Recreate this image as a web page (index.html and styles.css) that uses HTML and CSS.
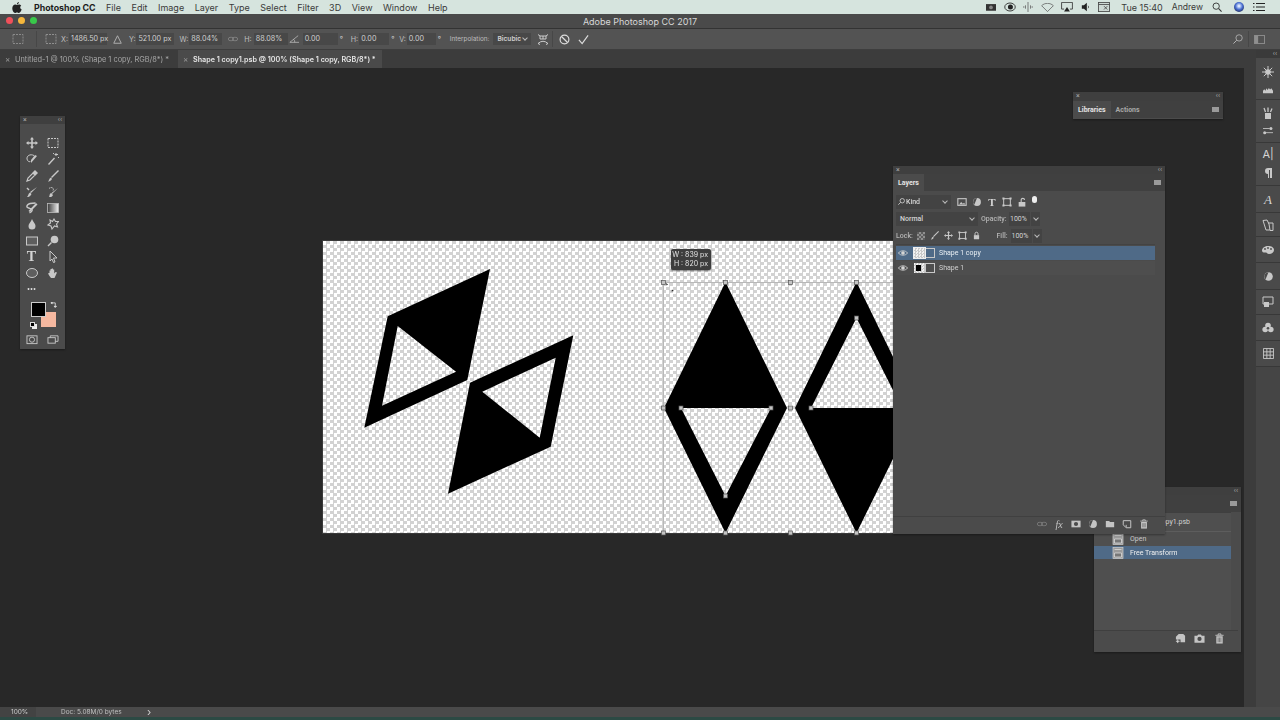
FILE: index.html
```html
<!DOCTYPE html>
<html lang="en">
<head>
  <meta charset="UTF-8">
  <title>Adobe Photoshop CC 2017</title>
  <link rel="stylesheet" href="styles.css">
</head>
<body>
<svg class="sprite" width="0" height="0">
  <defs>
    <symbol id="i-move" viewBox="0 0 12 12"><path d="M6 0 8 2.500H4ZM6 12 4 9.500H8ZM0 6 2.500 4V8ZM12 6 9.500 8V4Z" fill="currentColor"/><path d="M6 2V10M2 6H10" stroke="currentColor" stroke-width="1.600"/></symbol>
    <symbol id="i-marquee" viewBox="0 0 12 12"><rect x="1" y="1.500" width="10" height="9" fill="none" stroke="currentColor" stroke-dasharray="2 1"/></symbol>
    <symbol id="i-lasso" viewBox="0 0 12 12"><path d="M8 2.500C4 .5 .5 3 1 6c.4 2.500 3 3.500 3.500 2" fill="none" stroke="currentColor"/><path d="M5 10 11 3 9 2 5 7Z" fill="currentColor"/></symbol>
    <symbol id="i-wand" viewBox="0 0 12 12"><path d="M1 11 7 4.500 8 5.500 2 12Z" fill="currentColor"/><path d="M9 0V3M7.500 1.500H11M11 4 12 5M6 0 7 1" stroke="currentColor"/></symbol>
    <symbol id="i-dropper" viewBox="0 0 12 12"><path d="M1 11 2 8 7 3 9 5 4 10Z" fill="none" stroke="currentColor" stroke-width="1.200"/><path d="M6.500 2.500 9 0l3 3-2.500 2.500Z" fill="currentColor"/></symbol>
    <symbol id="i-brush" viewBox="0 0 12 12"><path d="M11 0 12 1 5 8 4 7Z" fill="currentColor"/><path d="M4 7.500 5 9C4 11 2 11.500 1 11.500 2.500 10.500 2 8 4 7.500Z" fill="currentColor"/></symbol>
    <symbol id="i-stamp" viewBox="0 0 12 12"><path d="M11 1 5 7 4 6ZM4 6.500 5.500 8C4.500 10.500 2.500 11 1 11 2.500 10 2 7.500 4 6.500Z" fill="currentColor"/><path d="M1 2 3 4" stroke="currentColor" stroke-width="1.500"/></symbol>
    <symbol id="i-history" viewBox="0 0 12 12"><path d="M11 2 5 8 4.500 7ZM4 7 6 9C5 11.500 3 11 2 11 3 10 2 8 4 7Z" fill="currentColor"/><path d="M2 2.500C5 0 8 3 5.500 5" fill="none" stroke="currentColor" stroke-dasharray="1.500 .8"/></symbol>
    <symbol id="i-eraser" viewBox="0 0 12 12"><path d="M9.500 1C7 1 3 1 1.500 3 0 5 1.500 6 4 6.500 7 7 7 9 3.500 11" fill="none" stroke="currentColor" stroke-width="1.400"/><path d="M10 1 11.500 2.500 4 10 2.500 9Z" fill="currentColor"/></symbol>
    <symbol id="i-gradient" viewBox="0 0 12 12"><defs><linearGradient id="grad"><stop offset="0" stop-color="#3a3a3a"/><stop offset="1" stop-color="#efefef"/></linearGradient></defs><rect x=".5" y="1.500" width="11" height="9" fill="url(#grad)" stroke="#bbb" stroke-width=".8"/></symbol>
    <symbol id="i-drop" viewBox="0 0 12 12"><path d="M6 1C7 4 9.500 5.500 9.500 8A3.500 3.500 0 0 1 2.500 8C2.500 5.500 5 4 6 1Z" fill="currentColor"/></symbol>
    <symbol id="i-smudge" viewBox="0 0 12 12"><path d="M7 1 8.500 3.500 11.500 3.500 9.500 6 10.500 9 7.500 8 5 11 4 8 1 7 3.500 5 3 2 5.500 3.500Z" fill="none" stroke="currentColor" stroke-width="1.100"/></symbol>
    <symbol id="i-rect" viewBox="0 0 12 12"><rect x=".5" y="2" width="11" height="8" fill="#5e5e5e" stroke="currentColor"/></symbol>
    <symbol id="i-dodge" viewBox="0 0 12 12"><circle cx="7.500" cy="4.500" r="3.800" fill="currentColor"/><path d="M4.500 7.500 1 11" stroke="currentColor" stroke-width="1.500"/></symbol>
    <symbol id="i-select" viewBox="0 0 12 12"><path d="M3 0 10 7 6.500 7 8 11 6.500 11.500 5 8 3 10Z" fill="none" stroke="currentColor"/></symbol>
    <symbol id="i-ellipse" viewBox="0 0 12 12"><ellipse cx="6" cy="6" rx="5.500" ry="4.500" fill="#5e5e5e" stroke="currentColor"/></symbol>
    <symbol id="i-hand" viewBox="0 0 12 12"><path d="M2.500 6V3.500h1V6 2h1.200v4V1.500H6V6V2.500h1.200V6.500L8.500 5 10 5.500 7.500 11H4C3 10 2 8 1 6.500L2 6Z" fill="currentColor"/></symbol>
    <symbol id="i-quick" viewBox="0 0 12 12"><rect x=".5" y="2" width="11" height="8.500" fill="none" stroke="currentColor"/><circle cx="6" cy="6.200" r="2.800" fill="none" stroke="currentColor"/></symbol>
    <symbol id="i-screen" viewBox="0 0 12 12"><rect x=".5" y="4" width="8" height="6" fill="none" stroke="currentColor"/><path d="M3 4V2H11.500V8H8.500" fill="none" stroke="currentColor"/></symbol>
    <symbol id="i-image" viewBox="0 0 12 12"><rect x="1" y="2" width="10" height="8" fill="none" stroke="currentColor" stroke-width="1.300"/><path d="M2.500 9 5 6 7 8 8.500 7 10 9Z" fill="currentColor"/></symbol>
    <symbol id="i-adjust" viewBox="0 0 12 12"><circle cx="6" cy="6" r="4.700" fill="currentColor"/><path d="M6 1.300A4.700 4.700 0 0 0 2.700 9.300Z" fill="#4b4b4b"/></symbol>
    <symbol id="i-shape" viewBox="0 0 12 12"><rect x="2" y="2" width="8" height="8" fill="none" stroke="currentColor" stroke-width="1.200"/><path d="M.5.500H3V3H.5ZM9 .5h2.500V3H9ZM.5 9H3v2.500H.5ZM9 9h2.500v2.500H9Z" fill="currentColor"/></symbol>
    <symbol id="i-smart" viewBox="0 0 12 12"><path d="M2 6H10V11.500H2Z" fill="currentColor"/><path d="M5 6V3.500C5 1 9 1 9 3.500" fill="none" stroke="currentColor" stroke-width="1.300"/></symbol>
    <symbol id="i-lock" viewBox="0 0 12 12"><path d="M2.500 5.500H9.500V11H2.500Z" fill="currentColor"/><path d="M4 5.500V3.500C4 1 8 1 8 3.500V5.500" fill="none" stroke="currentColor" stroke-width="1.300"/></symbol>
    <symbol id="i-eye" viewBox="0 0 12 12"><path d="M.5 6C3 2.500 9 2.500 11.500 6 9 9.500 3 9.500 .5 6Z" fill="none" stroke="currentColor"/><circle cx="6" cy="6" r="2.200" fill="currentColor"/></symbol>
    <symbol id="i-link" viewBox="0 0 12 12"><rect x=".5" y="4" width="6" height="4" rx="2" fill="none" stroke="currentColor"/><rect x="5.500" y="4" width="6" height="4" rx="2" fill="none" stroke="currentColor"/></symbol>
    <symbol id="i-mask" viewBox="0 0 12 12"><path d="M.5 2H11.500V10H.5Z" fill="currentColor"/><circle cx="6" cy="6" r="2.500" fill="#4b4b4b"/></symbol>
    <symbol id="i-folder" viewBox="0 0 12 12"><path d="M1 2.500H5L6 3.500H11V10H1Z" fill="currentColor"/></symbol>
    <symbol id="i-new" viewBox="0 0 12 12"><path d="M1.500 2H10.500V10.500H5L1.500 7Z M5 7V10" fill="none" stroke="currentColor" stroke-width="1.200"/></symbol>
    <symbol id="i-trash" viewBox="0 0 12 12"><path d="M1.500 2.500H10.500M4.500 2.500V1H7.500V2.500" fill="none" stroke="currentColor"/><path d="M2.500 3.500H9.500V11.500H2.500Z" fill="currentColor"/><path d="M4.500 5V10M6 5V10M7.500 5V10" stroke="#4b4b4b" stroke-width=".6"/></symbol>
    <symbol id="i-doc" viewBox="0 0 12 12"><rect x="1" y="0.500" width="10" height="11" fill="#9a9a9a" stroke="#cfcfcf" stroke-width=".7"/><path d="M2.500 2.500H9.500M2.500 6H9.500V10H2.500Z" fill="#777" stroke="#e4e4e4" stroke-width=".7"/></symbol>
    <symbol id="i-camera" viewBox="0 0 12 12"><path d="M.5 3H3.500L4.500 1.500H7.500L8.500 3H11.500V10.500H.5Z" fill="currentColor"/><circle cx="6" cy="6.500" r="2.300" fill="#4b4b4b"/></symbol>
    <symbol id="i-snap" viewBox="0 0 12 12"><path d="M4 1H9L11 3V10H6V7H1V4Z" fill="currentColor"/><path d="M1 9H5M3 7V11" stroke="#ddd"/></symbol>
    <symbol id="i-gear" viewBox="0 0 12 12"><circle cx="6" cy="6" r="2.800" fill="currentColor"/><path d="M6 0V12M0 6H12M1.800 1.800 10.200 10.200M10.200 1.800 1.800 10.200" stroke="currentColor"/></symbol>
    <symbol id="i-hist" viewBox="0 0 12 12"><path d="M0 10V7L1.500 5 3 7 4 4 5.500 6 7 3.500 8.500 5.500 10 4 12 7V10Z" fill="currentColor"/></symbol>
    <symbol id="i-brushes" viewBox="0 0 12 12"><path d="M3 6H9V12H3Z" fill="currentColor"/><path d="M3.500 5 2 1M6 5V.5M8.500 5 10 1.500" stroke="currentColor" stroke-width="1.300"/></symbol>
    <symbol id="i-sliders" viewBox="0 0 12 12"><path d="M0 3H8M3 8H12" stroke="currentColor"/><circle cx="9.500" cy="3" r="1.800" fill="currentColor"/><circle cx="2" cy="8" r="1.800" fill="currentColor"/></symbol>
    <symbol id="i-para" viewBox="0 0 12 12"><path d="M6 1H10V11H8V3H7V11H6V7A3 3 0 0 1 6 1Z" fill="currentColor"/></symbol>
    <symbol id="i-swatch" viewBox="0 0 12 12"><path d="M1 1.500 5 1 7 5 8 11 4 11Z" fill="none" stroke="currentColor"/><path d="M6 4H11V11.500H8" fill="none" stroke="currentColor"/></symbol>
    <symbol id="i-palette" viewBox="0 0 12 12"><path d="M6 2C2 2 0 4.500 0 6.500 0 9 3 8.500 4 8.500 5 8.500 5 10 7 10 10 10 12 8 12 6 12 3.500 9.500 2 6 2Z" fill="currentColor"/><circle cx="3" cy="5" r=".9" fill="#4b4b4b"/><circle cx="6" cy="4" r=".9" fill="#4b4b4b"/><circle cx="9" cy="5" r=".9" fill="#4b4b4b"/></symbol>
    <symbol id="i-grid" viewBox="0 0 12 12"><path d="M.5.500H11.500V11.500H.5ZM4.200.5V11.500M7.800.5V11.500M.5 4.200H11.500M.5 7.800H11.500" fill="none" stroke="currentColor"/></symbol>
    <symbol id="i-style" viewBox="0 0 12 12"><path d="M1 1H11V8H1Z" fill="none" stroke="currentColor"/><path d="M2 6H7V11H2Z" fill="currentColor"/></symbol>
    <symbol id="i-flower" viewBox="0 0 12 12"><circle cx="6" cy="3.500" r="2.800" fill="currentColor"/><circle cx="3.200" cy="7.500" r="2.800" fill="currentColor"/><circle cx="8.800" cy="7.500" r="2.800" fill="currentColor"/><circle cx="6" cy="6.300" r="1.300" fill="#4b4b4b"/></symbol>
  </defs>
</svg>

<div class="screen">
  <div class="menubar">
    <svg class="apple" viewBox="0 0 12 14" width="10" height="11"><path d="M8.500 0C8.600 1.500 7.300 3 5.900 3 5.800 1.500 7.200.2 8.500 0ZM6 3.700C6.800 3.700 7.500 3.100 8.700 3.100 9.500 3.100 10.700 3.500 11.400 4.600 9.400 5.800 9.700 8.700 12 9.600 11.300 11.300 10 14 8.500 14 7.500 14 7.200 13.400 6 13.400 4.800 13.400 4.400 14 3.500 14 1.800 14 0 10.800 0 8 0 5 2 3.200 3.800 3.200 4.800 3.200 5.400 3.700 6 3.700Z" fill="#222"/></svg>
    <span class="menu-app">Photoshop CC</span>
    <span>File</span><span>Edit</span><span>Image</span><span>Layer</span><span>Type</span><span>Select</span><span>Filter</span><span>3D</span><span>View</span><span>Window</span><span>Help</span>
    <div class="status-icons">
      <svg viewBox="0 0 12 12" width="10" height="10"><path d="M0 2.500H12V10.500H0Z" fill="#333"/><circle cx="6" cy="6.500" r="2.200" fill="#888"/></svg>
      <svg viewBox="0 0 14 12" width="12" height="10"><ellipse cx="7" cy="6" rx="6.300" ry="4.800" fill="none" stroke="#222"/><circle cx="7.500" cy="6" r="3" fill="#222"/></svg>
      <svg viewBox="0 0 12 12" width="10" height="10"><path d="M6 0V12M3 4V8M1 5V7M9 4V8M11 5V7" stroke="#666"/></svg>
      <svg viewBox="0 0 14 10" width="13" height="9"><path d="M.5 3C4 -.5 10 -.5 13.500 3L7 9.500Z" fill="none" stroke="#555" stroke-width=".8"/></svg>
      <svg viewBox="0 0 14 12" width="12" height="10"><path d="M3.500 8.500H.5V.5H13.500V8.500H10.500" fill="none" stroke="#333"/><path d="M7 6 10.500 11.500H3.500Z" fill="#222"/></svg>
      <svg viewBox="0 0 12 12" width="10" height="10"><path d="M1 4H3.500L7 1V11L3.500 8H1Z" fill="#222"/><path d="M8.500 4.500Q10 6 8.500 7.500" fill="none" stroke="#555"/></svg>
      <svg viewBox="0 0 14 12" width="12" height="10"><rect x=".5" y=".5" width="13" height="11" fill="#cdd8d3" stroke="#444"/><path d="M.5 3H13.500" stroke="#444"/><path d="M7 5 11 9M11 5 7 9" stroke="#444"/></svg>
    </div>
    <span class="clock">Tue 15:40</span>
    <span class="user">Andrew</span>
    <svg class="menu-search" viewBox="0 0 12 12" width="10" height="10"><circle cx="5" cy="5" r="3.800" fill="none" stroke="#333" stroke-width="1.100"/><path d="M8 8 11.500 11.500" stroke="#333" stroke-width="1.300"/></svg>
    <span class="siri"></span>
    <svg class="menu-list" viewBox="0 0 12 10" width="12" height="10"><path d="M3 1.500H12M3 5H12M3 8.500H12M0 1.500H1.500M0 5H1.500M0 8.500H1.500" stroke="#222" stroke-width="1.100"/></svg>
  </div>

  <div class="titlebar">
    <div class="lights"><i class="red"></i><i class="yellow"></i><i class="green"></i></div>
    <span class="title-text">Adobe Photoshop CC 2017</span>
  </div>

  <div class="options">
    <svg class="ico tool-ico" width="12" height="12"><use href="#i-marquee"/></svg>
    <span class="opt-sep sep-a"></span>
    <svg class="ico ref-ico" width="12" height="12"><use href="#i-marquee"/></svg>
    <label class="lbl lbl-x">X:</label><span class="field w38">1486.50 px</span>
    <svg class="ico delta" viewBox="0 0 12 12" width="9" height="9"><path d="M6 1 11 11H1Z" fill="none" stroke="currentColor" stroke-width="1.200"/></svg>
    <label class="lbl lbl-y">Y:</label><span class="field w38">521.00 px</span>
    <label class="lbl lbl-w">W:</label><span class="field w33">88.04%</span>
    <svg class="ico link" width="10" height="10"><use href="#i-link"/></svg>
    <label class="lbl lbl-h">H:</label><span class="field w34">88.08%</span>
    <svg class="ico angle" viewBox="0 0 12 12" width="10" height="10"><path d="M11 2 1 10H12M7 10Q7 7 5 6" fill="none" stroke="currentColor"/></svg>
    <span class="field w35">0.00</span><span class="deg">°</span>
    <label class="lbl lbl-hs">H:</label><span class="field w30">0.00</span><span class="deg">°</span>
    <label class="lbl lbl-v">V:</label><span class="field w29">0.00</span><span class="deg">°</span>
    <label class="lbl lbl-int">Interpolation:</label>
    <span class="field select-b">Bicubic<b class="chev"></b></span>
    <svg class="ico warp" viewBox="0 0 12 12" width="12" height="12"><path d="M1 1.500 3 3H9L11 1.500M3 3V6H9V3M6 3V6M1 10.500Q6 6 11 10.500M1 10.500 3 11.500M11 10.500 9 11.500" fill="none" stroke="currentColor"/></svg>
    <span class="opt-sep sep-b"></span>
    <svg class="ico cancel" viewBox="0 0 12 12" width="11" height="11"><circle cx="6" cy="6" r="4.800" fill="none" stroke="#ddd" stroke-width="1.300"/><path d="M2.700 2.700 9.300 9.300" stroke="#ddd" stroke-width="1.300"/></svg>
    <svg class="ico commit" viewBox="0 0 12 12" width="11" height="11"><path d="M1 6.500 4.500 10.500 11 1.500" fill="none" stroke="#ddd" stroke-width="1.300"/></svg>
    <div class="opt-right">
      <svg class="ico" viewBox="0 0 12 12" width="10" height="10"><circle cx="7.300" cy="4.700" r="3.800" fill="none" stroke="currentColor"/><path d="M4.500 7.500 .5 11.500" stroke="currentColor" stroke-width="1.200"/></svg>
      <span class="opt-sep"></span>
      <svg class="ico ws-ico" viewBox="0 0 12 10" width="11" height="9"><rect x=".5" y=".5" width="11" height="9" fill="none" stroke="currentColor"/><rect x=".5" y=".5" width="4" height="9" fill="currentColor"/></svg>
    </div>
  </div>

  <div class="tabs">
    <div class="tab"><span class="tab-x">×</span>Untitled-1 @ 100% (Shape 1 copy, RGB/8*) *</div>
    <div class="tab active"><span class="tab-x">×</span>Shape 1 copy1.psb @ 100% (Shape 1 copy, RGB/8*) *</div>
  </div>

  <div class="work">
    <div class="stage">
      <div class="artboard">
        <svg class="shapes" viewBox="323 241 600 292" width="600" height="292">
          <path fill-rule="evenodd" d="M490 269 387.700 316.300 364.300 427.700 467.300 380ZM397.700 326 456 371.700 382 405.700Z"/>
          <path fill-rule="evenodd" d="M573.300 335.300 470 382.700 448 493.700 550.700 446.700ZM555.700 357.700 482.300 391.700 539.700 437.700Z"/>
          <path fill-rule="evenodd" d="M725.500 282 664 408 725.500 533 787 408ZM681 408H771L725.500 496Z"/>
          <path fill-rule="evenodd" d="M856.500 282 795 408 856.500 533 918 408ZM856.500 318 811 408H902Z"/>
          <path class="bbox" d="M663.500 282.500H892M663.500 282.500V533"/>
          <g class="handles">
            <rect x="661.500" y="280.500" width="4" height="4"/><rect x="723.500" y="280.500" width="4" height="4"/><rect x="788.500" y="280.500" width="4" height="4"/><rect x="854.500" y="280.500" width="4" height="4"/>
            <rect x="661.500" y="406" width="4" height="4"/><rect x="679" y="406" width="4" height="4"/><rect x="769" y="406" width="4" height="4"/><rect x="788.500" y="406" width="4" height="4"/><rect x="809" y="406" width="4" height="4"/>
            <rect x="854.500" y="316" width="4" height="4"/><rect x="723.500" y="494" width="4" height="4"/>
            <rect x="661.500" y="531" width="4" height="4"/><rect x="723.500" y="531" width="4" height="4"/><rect x="788.500" y="531" width="4" height="4"/><rect x="854.500" y="531" width="4" height="4"/>
          </g>
          <path d="M666 283 668 284.500 666.500 285.500ZM672 289.500 674 291 671.500 291.500Z" fill="#222"/>
        </svg>
        <div class="size-tip">W : 839 px<br>H : 820 px</div>
      </div>

      <div class="panel toolbox">
        <div class="panel-head"><span class="close">×</span><span class="collapse">‹‹</span></div>
        <div class="tool-grid">
          <svg width="12" height="12"><use href="#i-move"/></svg><svg width="12" height="12"><use href="#i-marquee"/></svg>
          <svg width="12" height="12"><use href="#i-lasso"/></svg><svg width="12" height="12"><use href="#i-wand"/></svg>
          <svg width="12" height="12"><use href="#i-dropper"/></svg><svg width="12" height="12"><use href="#i-brush"/></svg>
          <svg width="12" height="12"><use href="#i-stamp"/></svg><svg width="12" height="12"><use href="#i-history"/></svg>
          <svg width="12" height="12"><use href="#i-eraser"/></svg><svg width="12" height="12"><use href="#i-gradient"/></svg>
          <svg width="12" height="12"><use href="#i-drop"/></svg><svg width="12" height="12"><use href="#i-smudge"/></svg>
          <svg width="12" height="12"><use href="#i-rect"/></svg><svg width="12" height="12"><use href="#i-dodge"/></svg>
          <span class="type-t">T</span><svg width="12" height="12"><use href="#i-select"/></svg>
          <svg width="12" height="12"><use href="#i-ellipse"/></svg><svg width="12" height="12"><use href="#i-hand"/></svg>
          <span class="dots">•••</span><span></span>
        </div>
        <div class="swatches">
          <span class="bg-color"></span>
          <span class="fg-color"></span>
          <span class="default-colors"></span>
          <svg class="swap" viewBox="0 0 8 8" width="7" height="7"><path d="M1 1H6V6M1 1 2.500 0V2ZM6 6 4.500 5H7.500Z" fill="none" stroke="#ddd"/></svg>
        </div>
        <div class="tool-bottom">
          <svg width="12" height="11"><use href="#i-quick"/></svg><svg width="12" height="11"><use href="#i-screen"/></svg>
        </div>
      </div>

      <div class="panel libraries">
        <div class="panel-head"><span class="close">×</span><span class="collapse">‹‹</span></div>
        <div class="panel-tabs">
          <span class="ptab on">Libraries</span><span class="ptab">Actions</span>
          <span class="panel-menu"></span>
        </div>
      </div>

      <div class="panel history">
        <div class="panel-head"><span class="collapse">‹‹</span></div>
        <div class="panel-tabs"><span class="panel-menu"></span></div>
        <div class="hist-body">
          <div class="hist-file">Shape 1 copy1.psb</div>
          <div class="hist-row"><svg width="12" height="12"><use href="#i-doc"/></svg>Open</div>
          <div class="hist-row on"><svg width="12" height="12"><use href="#i-doc"/></svg>Free Transform</div>
        </div>
        <div class="panel-foot">
          <svg width="11" height="11"><use href="#i-snap"/></svg><svg width="11" height="11"><use href="#i-camera"/></svg><svg width="11" height="11"><use href="#i-trash"/></svg>
        </div>
      </div>

      <div class="panel layers">
        <div class="panel-head"><span class="close">×</span><span class="collapse">‹‹</span></div>
        <div class="panel-tabs">
          <span class="ptab on">Layers</span>
          <span class="panel-menu"></span>
        </div>
        <div class="layer-row-ctl filter-row">
          <span class="ctl kind"><svg class="kind-mag" viewBox="0 0 12 12" width="7" height="7"><circle cx="7.300" cy="4.700" r="3.800" fill="none" stroke="currentColor" stroke-width="1.400"/><path d="M4.500 7.500 .5 11.500" stroke="currentColor" stroke-width="1.400"/></svg>Kind<b class="chev"></b></span>
          <svg width="10" height="10"><use href="#i-image"/></svg>
          <svg width="10" height="10"><use href="#i-adjust"/></svg>
          <span class="type-t small">T</span>
          <svg width="10" height="10"><use href="#i-shape"/></svg>
          <svg width="10" height="10"><use href="#i-smart"/></svg>
          <span class="toggle"></span>
        </div>
        <div class="layer-row-ctl blend-row">
          <span class="ctl normal">Normal<b class="chev"></b></span>
          <span class="ctl-lbl">Opacity:</span>
          <span class="ctl pct">100%</span><span class="ctl pct-arrow"><b class="chev"></b></span>
        </div>
        <div class="layer-row-ctl lock-row">
          <span class="ctl-lbl lock-lbl">Lock:</span>
          <span class="lock-check"></span>
          <svg width="9" height="9"><use href="#i-brush"/></svg>
          <svg width="9" height="9"><use href="#i-move"/></svg>
          <svg width="9" height="9"><use href="#i-shape"/></svg>
          <svg width="9" height="9"><use href="#i-lock"/></svg>
          <span class="ctl-lbl fill-lbl">Fill:</span>
          <span class="ctl pct">100%</span><span class="ctl pct-arrow"><b class="chev"></b></span>
        </div>
        <div class="layer-list">
          <div class="layer on">
            <svg class="eye" width="10" height="10"><use href="#i-eye"/></svg>
            <span class="thumb selected"></span><span class="vmask"></span>
            <span class="layer-name">Shape 1 copy</span>
          </div>
          <div class="layer">
            <svg class="eye" width="10" height="10"><use href="#i-eye"/></svg>
            <span class="thumb"><i></i></span><span class="vmask"></span>
            <span class="layer-name">Shape 1</span>
          </div>
        </div>
        <div class="panel-foot">
          <svg class="dim" width="10" height="10"><use href="#i-link"/></svg>
          <span class="fx">fx</span>
          <svg width="10" height="10"><use href="#i-mask"/></svg>
          <svg width="10" height="10"><use href="#i-adjust"/></svg>
          <svg width="10" height="10"><use href="#i-folder"/></svg>
          <svg width="10" height="10"><use href="#i-new"/></svg>
          <svg width="10" height="10"><use href="#i-trash"/></svg>
        </div>
      </div>
    </div>

    <div class="dock">
      <div class="dock-head">‹‹</div>
      <div class="dock-group h42"><svg width="12" height="12"><use href="#i-gear"/></svg><svg width="14" height="10"><use href="#i-hist"/></svg></div>
      <div class="dock-group h43"><svg width="12" height="12"><use href="#i-brushes"/></svg><svg width="12" height="10"><use href="#i-sliders"/></svg></div>
      <div class="dock-group h43"><span class="char-a">A|</span><svg width="12" height="12"><use href="#i-para"/></svg></div>
      <div class="dock-group h27"><span class="char-a italic">A</span></div>
      <div class="dock-group h24"><svg width="12" height="12"><use href="#i-swatch"/></svg></div>
      <div class="dock-group h26"><svg width="12" height="12"><use href="#i-palette"/></svg></div>
      <div class="dock-group h27"><svg width="11" height="11"><use href="#i-adjust"/></svg></div>
      <div class="dock-group h25"><svg width="12" height="12"><use href="#i-style"/></svg></div>
      <div class="dock-group h26"><svg width="12" height="12"><use href="#i-flower"/></svg></div>
      <div class="dock-group h26"><svg width="11" height="11"><use href="#i-grid"/></svg></div>
    </div>
  </div>

  <div class="statusbar">
    <span class="zoom-box">100%</span>
    <span class="doc-info">Doc: 5.08M/0 bytes</span>
    <span class="status-arrow">›</span>
  </div>
  <div class="desktop-strip"></div>
</div>
</body>
</html>
```

FILE: styles.css
```css
* {
  box-sizing: border-box;
}

html, body {
  margin: 0;
  padding: 0;
  background: #282828;
}

.sprite {
  position: absolute;
}

.screen {
  width: 1280px;
  height: 720px;
  overflow: hidden;
  display: flex;
  flex-direction: column;
  font-family: Inter, "Liberation Sans", sans-serif;
  color: #cfcfcf;
  font-size: 7.5px;
  filter: blur(0.45px);
}

/* mac menu bar */
.menubar {
  height: 14px;
  background: #d6e4de;
  color: #3a3a3a;
  display: flex;
  align-items: center;
  font-size: 9px;
  gap: 10.5px;
  padding-left: 12px;
  flex: none;
}

.apple {
  margin-right: 1.5px;
}

.menu-app {
  font-weight: 700;
  font-size: 8.8px;
  color: #1c1c1c;
}

.status-icons {
  margin-left: auto;
  display: flex;
  align-items: center;
  gap: 7.5px;
}

.clock {
  margin-left: 0.5px;
}

.user {
  margin-left: -1.5px;
  font-size: 8.6px;
}

.menu-search {
  margin-left: -1.5px;
}

.siri {
  width: 10px;
  height: 10px;
  border-radius: 50%;
  background: radial-gradient(circle at 50% 40%, #d9e6ff 10%, #4a6fd0 45%, #1c2350 85%);
  margin-left: 1.5px;
}

.menu-list {
  margin-left: -1.5px;
  margin-right: 15px;
}

/* window title */
.titlebar {
  height: 15px;
  background: #4a4a4a;
  border-bottom: 1px solid #333;
  display: flex;
  align-items: center;
  justify-content: center;
  position: relative;
  flex: none;
}

.title-text {
  font-size: 9px;
  color: #d8d8d8;
}

.lights {
  position: absolute;
  left: 6px;
  top: 3px;
  display: flex;
  gap: 5px;
}

.lights i {
  width: 7px;
  height: 7px;
  border-radius: 50%;
}

.red { background: #f0505a; }
.yellow { background: #f5b73c; }
.green { background: #38c84a; }

/* options bar */
.options {
  height: 21px;
  background: #535353;
  border-bottom: 1px solid #3e3e3e;
  display: flex;
  align-items: center;
  flex: none;
  padding-left: 12px;
  font-size: 7.2px;
}

.ico {
  color: #b5b5b5;
  flex: none;
}

.tool-ico {
  color: #8a8a8a;
}

.opt-sep {
  width: 1px;
  height: 16px;
  background: #474747;
  flex: none;
}

.sep-a { margin-left: 12px; }
.ref-ico { margin-left: 8px; color: #8f8f8f; }
.lbl { color: #bdbdbd; flex: none; }
.lbl-x { margin-left: 4px; margin-right: 1px; }
.delta { margin-left: 6px; }
.lbl-y { margin-left: 7px; margin-right: 1px; }
.lbl-w { margin-left: 5px; margin-right: 1px; }
.link { margin-left: 6px; color: #888; }
.lbl-h { margin-left: 6px; margin-right: 2px; }
.angle { margin-left: 1px; }
.angle + .field { margin-left: 4px; }
.lbl-hs { margin-left: 7px; margin-right: 1px; }
.lbl-v { margin-left: 4px; margin-right: 1px; }
.lbl-int { margin-left: 8px; font-size: 6.4px; }

.field {
  height: 12px;
  line-height: 12px;
  background: #484848;
  color: #d0d0d0;
  padding-left: 2px;
  flex: none;
  white-space: nowrap;
}

.w38 { width: 38px; }
.w33 { width: 33px; }
.w34 { width: 34px; }
.w35 { width: 35px; }
.w30 { width: 30px; }
.w29 { width: 29px; }

.deg {
  margin-left: 2px;
  width: 4px;
  flex: none;
}

.select-b {
  width: 38px;
  margin-left: 4px;
  padding-left: 4px;
  font-weight: 600;
  font-size: 6.6px;
  position: relative;
}

.chev {
  position: absolute;
  right: 4px;
  top: 50%;
  width: 4px;
  height: 4px;
  margin-top: -3px;
  border-right: 1px solid #bbb;
  border-bottom: 1px solid #bbb;
  transform: rotate(45deg);
}

.warp { margin-left: 6px; color: #ccc; }
.sep-b { margin-left: 3px; }
.cancel { margin-left: 5.5px; }
.commit { margin-left: 8px; }

.opt-right {
  margin-left: auto;
  margin-right: 15px;
  display: flex;
  align-items: center;
  gap: 5px;
}

.ws-ico {
  color: #8f8f8f;
}

/* document tabs */
.tabs {
  height: 18px;
  background: #3c3c3c;
  display: flex;
  flex: none;
}

.tab {
  width: 178px;
  display: flex;
  align-items: center;
  padding-left: 5px;
  color: #a6a6a6;
  white-space: nowrap;
  font-size: 7.4px;
}

.tab.active {
  width: 204px;
  background: #4a4a4a;
  color: #e6e6e6;
  font-weight: 600;
  font-size: 7.2px;
}

.tab-x {
  width: 10px;
  font-size: 8px;
  color: #999;
  font-weight: 400;
}

/* workspace */
.work {
  flex: 1;
  display: flex;
  min-height: 0;
}

.stage {
  flex: 1;
  position: relative;
  background: #282828;
  border-right: 12px solid #3c3c3c;
}

.artboard {
  position: relative;
  width: 600px;
  height: 292px;
  margin: 173px 0 0 323px;
  background-color: #fff;
  background-image: conic-gradient(#d2d2d2 25%, #fff 0 50%, #d2d2d2 0 75%, #fff 0);
  background-size: 7px 7px;
  box-shadow: 0 0 0 1px #3a3a3a;
}

.shapes {
  display: block;
  overflow: visible;
}

.bbox {
  fill: none;
  stroke: #b8b8b8;
  stroke-width: 1;
}

.handles rect {
  fill: #c4c4c4;
  stroke: #555;
  stroke-width: 0.7;
}

.size-tip {
  position: absolute;
  left: 348px;
  top: 8px;
  width: 40px;
  height: 21px;
  background: #3d3d3d;
  border-radius: 2px;
  box-shadow: 0 1px 2px rgba(0,0,0,.5);
  color: #e4e4e4;
  font-size: 7px;
  line-height: 8.5px;
  text-align: right;
  padding: 2px 3px 0 0;
}

/* floating panels */
.panel {
  position: absolute;
  background: #4b4b4b;
  box-shadow: 0 1px 2px rgba(0,0,0,.35);
  display: flex;
  flex-direction: column;
  font-family: Roboto, "Liberation Sans", sans-serif;
  font-size: 7px;
}

.panel-head {
  height: 8px;
  background: #3f3f3f;
  color: #aaa;
  font-size: 7px;
  line-height: 8px;
  display: flex;
  justify-content: space-between;
  padding: 0 3px;
  flex: none;
}

.panel-head .collapse:only-child {
  margin-left: auto;
}

.panel-tabs {
  height: 17px;
  background: #404040;
  display: flex;
  position: relative;
  align-items: stretch;
  flex: none;
}

.ptab {
  padding: 0 5px;
  display: flex;
  align-items: center;
  color: #a8a8a8;
  font-weight: 700;
  font-size: 7px;
}

.ptab.on {
  background: #4b4b4b;
  color: #e4e4e4;
}

.panel-menu {
  position: absolute;
  right: 4px;
  top: 6px;
  width: 7px;
  height: 5px;
  background: #9a9a9a;
}

.toolbox {
  left: 20px;
  top: 48px;
  width: 45px;
  height: 233px;
}

.tool-grid {
  display: grid;
  grid-template-columns: 21px 21px;
  grid-auto-rows: 16.25px;
  justify-items: center;
  align-items: center;
  padding: 11px 0 0 1px;
  color: #c8c8c8;
}

.type-t {
  font-family: "Liberation Serif", serif;
  font-size: 14px;
  line-height: 14px;
  color: #d5d5d5;
  font-weight: 700;
}

.dots {
  font-size: 9px;
  letter-spacing: 0;
  color: #ddd;
}

.swatches {
  position: relative;
  height: 27px;
  margin-top: 4px;
}

.fg-color {
  position: absolute;
  left: 11px;
  top: 0;
  width: 15px;
  height: 15px;
  background: #000;
  border: 1px solid #ccc;
}

.bg-color {
  position: absolute;
  left: 21px;
  top: 10px;
  width: 15px;
  height: 15px;
  background: #f5b8a0;
}

.default-colors {
  position: absolute;
  left: 10px;
  top: 20px;
  width: 5px;
  height: 5px;
  background: #000;
  box-shadow: 2px 2px 0 #eee;
  border: 1px solid #ddd;
}

.swap {
  position: absolute;
  left: 30px;
  top: 0;
}

.tool-bottom {
  display: flex;
  justify-content: space-between;
  padding: 5px 6px 0 6px;
  color: #c8c8c8;
}

.libraries {
  left: 1073px;
  top: 24px;
  width: 150px;
  height: 27px;
}

.libraries .panel-head {
  height: 9px;
}

.history {
  left: 1094px;
  top: 419px;
  width: 147px;
  height: 165px;
}

.hist-body {
  flex: 1;
  background: #4f4f4f;
  margin-right: 10px;
  border-top: 1px solid #3f3f3f;
}

.hist-file {
  height: 19px;
  padding-left: 37px;
  color: #d2d2d2;
  line-height: 18px;
  border-bottom: 1px solid #5d5d5d;
}

.hist-row {
  height: 14px;
  display: flex;
  align-items: center;
  gap: 6px;
  padding-left: 18px;
  color: #c8c8c8;
}

.hist-row.on {
  background: #4f6a87;
  color: #f0f0f0;
  height: 13px;
}

.history .panel-foot {
  height: 15px;
  justify-content: flex-end;
  gap: 8.5px;
  padding-right: 13.5px;
  margin-right: 3px;
  margin-bottom: 7px;
  border-top: 1px solid #3f3f3f;
  background: #4b4b4b;
}

.panel-foot {
  display: flex;
  align-items: center;
  color: #c4c4c4;
  flex: none;
}

.layers {
  left: 893px;
  top: 98px;
  width: 272px;
  height: 368px;
  z-index: 2;
}

.layer-row-ctl {
  display: flex;
  align-items: center;
  height: 17px;
  padding-left: 3px;
  color: #c8c8c8;
  flex: none;
}

.filter-row {
  margin-top: 2px;
  gap: 5px;
}

.ctl {
  height: 14px;
  line-height: 14px;
  background: #434343;
  color: #d4d4d4;
  position: relative;
  padding-left: 4px;
  font-weight: 500;
  flex: none;
}

.kind {
  width: 55px;
  margin-right: 1px;
  padding-left: 2px;
}

.kind-mag {
  vertical-align: -1px;
  margin-right: 1px;
}

.type-t.small {
  font-size: 11px;
  width: 10px;
  text-align: center;
}

.toggle {
  width: 5px;
  height: 7px;
  margin: -5px 0 0 0;
  border-radius: 3px;
  background: #eee;
}

.normal {
  width: 82px;
}

.ctl-lbl {
  color: #b5b5b5;
  font-weight: 500;
  margin-left: 3px;
  width: 28px;
  flex: none;
}

.pct {
  width: 21px;
  padding-left: 1px;
  font-weight: 400;
}

.pct-arrow {
  width: 9px;
  margin-left: 1px;
}

.pct-arrow .chev {
  right: 2.5px;
}

.lock-row {
  gap: 5px;
}

.lock-lbl {
  margin-left: 0;
  width: 16px;
}

.lock-check {
  width: 8px;
  height: 8px;
  background: conic-gradient(#8f8f8f 25%, #5d5d5d 0 50%, #8f8f8f 0 75%, #5d5d5d 0) 0 0 / 4px 4px;
}

.fill-lbl {
  margin-left: 10.5px;
  width: 12px;
}

.fill-lbl + .pct {
  margin-left: -3px;
}

.lock-row .pct-arrow {
  margin-left: -4px;
}

.layer-list {
  flex: 1;
  padding-top: 1px;
  border-top: 1px solid #434343;
  margin-right: 10px;
  margin-left: 3px;
}

.layer {
  height: 14px;
  margin-bottom: 1px;
  display: flex;
  align-items: center;
  background: #4e4e4e;
  color: #cfcfcf;
}

.layer.on {
  background: #4f6a87;
  color: #e8eef3;
}

.eye {
  margin-left: 2px;
  color: #d5d5d5;
}

.thumb {
  width: 11px;
  height: 10px;
  margin-left: 6px;
  position: relative;
  background: conic-gradient(#c9c9c9 25%, #f2f2f2 0 50%, #c9c9c9 0 75%, #f2f2f2 0) 0 0 / 3px 3px;
}

.thumb i {
  position: absolute;
  left: 2px;
  top: 2px;
  width: 5px;
  height: 6px;
  background: #000;
}

.thumb.selected {
  outline: 1px solid #eee;
}

.vmask {
  width: 10px;
  height: 10px;
  border: 1px solid #c8c8c8;
  margin-left: 0;
}

.layer-name {
  margin-left: 4px;
}

.layers .panel-foot {
  height: 18px;
  padding-bottom: 3px;
  margin-top: auto;
  background: #4b4b4b;
  border-top: 1px solid #404040;
  justify-content: flex-end;
  gap: 7px;
  padding-right: 16px;
}

.dim {
  color: #808080;
}

.fx {
  font-family: "Liberation Serif", serif;
  font-style: italic;
  font-size: 10px;
  width: 10px;
  text-align: center;
}

/* right dock */
.dock {
  width: 24px;
  background: #454545;
  margin-top: -18px;
  display: flex;
  flex-direction: column;
  color: #c8c8c8;
  flex: none;
  position: relative;
}

.dock-head {
  height: 8px;
  background: #3a3a3a;
  color: #aaa;
  font-size: 7px;
  line-height: 8px;
  text-align: right;
  padding-right: 3px;
  font-family: Roboto, sans-serif;
}

.dock-group {
  display: flex;
  flex-direction: column;
  align-items: center;
  justify-content: center;
  gap: 7px;
  background: #4a4a4a;
  border-bottom: 1px solid #383838;
}

.h42 { height: 42px; padding-top: 4px; }
.h43 { height: 43px; }
.h27 { height: 27px; }
.h24 { height: 24px; }
.h26 { height: 26px; }
.h25 { height: 25px; }

.char-a {
  font-size: 11px;
  line-height: 11px;
  color: #d5d5d5;
}

.char-a.italic {
  font-family: "Liberation Serif", serif;
  font-style: italic;
  font-size: 13px;
}

/* status bar */
.statusbar {
  height: 10px;
  background: #4a4a4a;
  display: flex;
  align-items: center;
  font-size: 6.5px;
  flex: none;
}

.zoom-box {
  width: 36px;
  height: 10px;
  line-height: 10px;
  padding-left: 11px;
  background: #434343;
}

.doc-info {
  margin-left: 25px;
  width: 85px;
  color: #c0c0c0;
}

.status-arrow {
  margin-left: 1px;
  font-size: 11px;
  line-height: 10px;
}

.desktop-strip {
  height: 3px;
  background: #2c4a44;
  flex: none;
}
```
